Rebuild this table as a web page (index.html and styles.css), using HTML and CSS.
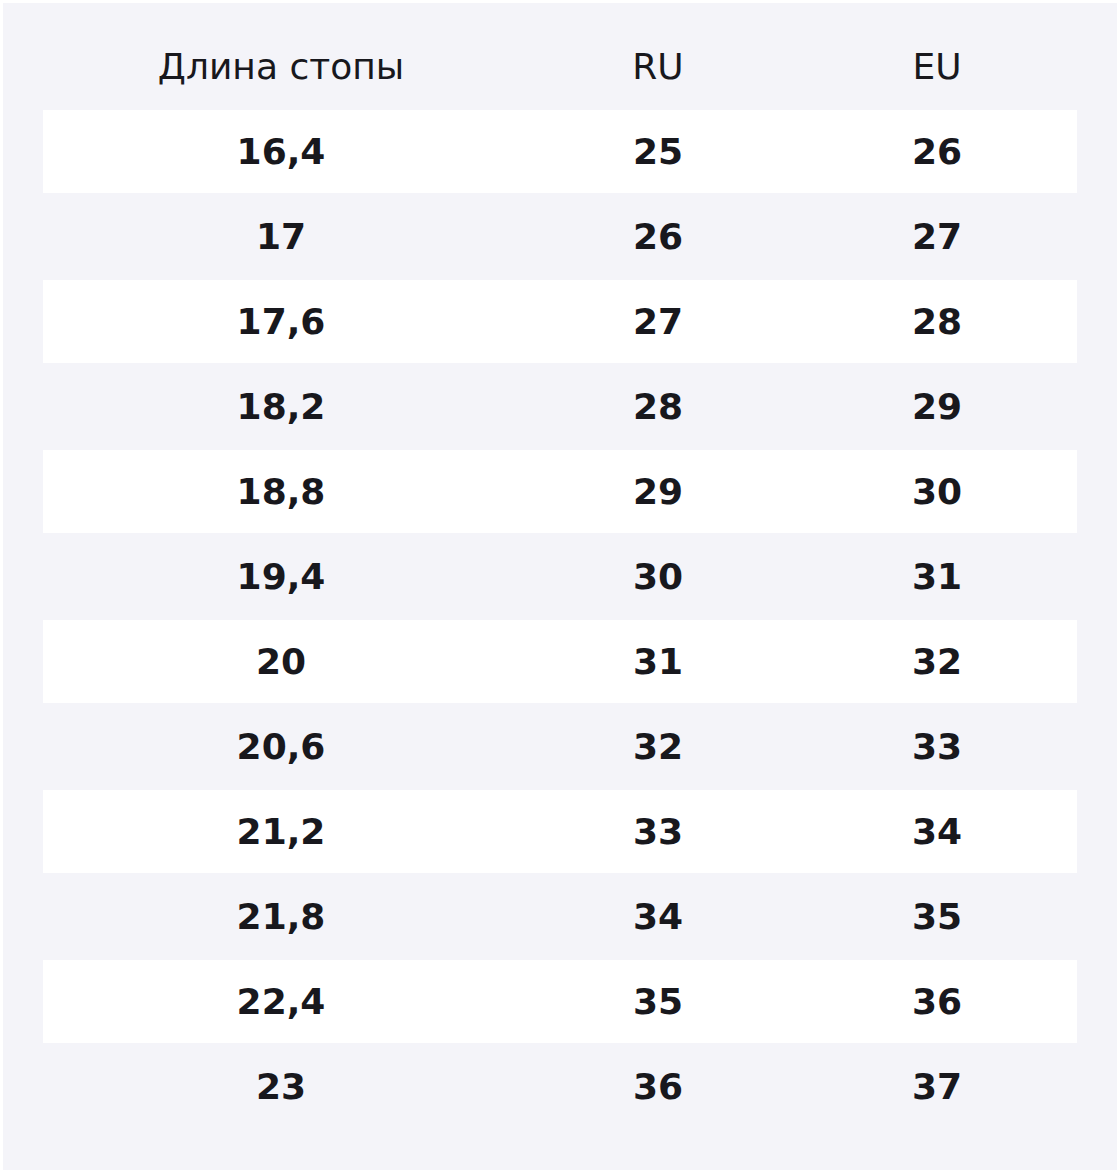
FILE: index.html
```html
<!DOCTYPE html>
<html lang="ru">
<head>
<meta charset="utf-8">
<title>Размеры</title>
<link rel="stylesheet" href="styles.css">
</head>
<body>
<div class="sheet">
  <div class="row head"><div>Длина стопы</div><div>RU</div><div>EU</div></div>
  <div class="row odd"><div>16,4</div><div>25</div><div>26</div></div>
  <div class="row"><div>17</div><div>26</div><div>27</div></div>
  <div class="row odd"><div>17,6</div><div>27</div><div>28</div></div>
  <div class="row"><div>18,2</div><div>28</div><div>29</div></div>
  <div class="row odd"><div>18,8</div><div>29</div><div>30</div></div>
  <div class="row"><div>19,4</div><div>30</div><div>31</div></div>
  <div class="row odd"><div>20</div><div>31</div><div>32</div></div>
  <div class="row"><div>20,6</div><div>32</div><div>33</div></div>
  <div class="row odd"><div>21,2</div><div>33</div><div>34</div></div>
  <div class="row"><div>21,8</div><div>34</div><div>35</div></div>
  <div class="row odd"><div>22,4</div><div>35</div><div>36</div></div>
  <div class="row"><div>23</div><div>36</div><div>37</div></div>
</div>
</body>
</html>
```
FILE: styles.css
```css
html, body { margin: 0; padding: 0; background: #ffffff; }
body { padding: 3px; }
.sheet {
  background: #f4f4f9;
  padding: 22px 40px 40px;
  font-family: "DejaVu Sans", sans-serif;
  color: #18181d;
}
.row {
  display: grid;
  grid-template-columns: 476px 278px 280px;
  height: 85px;
  box-sizing: border-box;
  border-bottom: 2px solid transparent;
  background-clip: padding-box;
  font-size: 36px;
  font-weight: bold;
}
.row > div {
  display: flex;
  align-items: center;
  justify-content: center;
}
.row.head { font-weight: normal; }
.row.odd { background-color: #ffffff; }
```
